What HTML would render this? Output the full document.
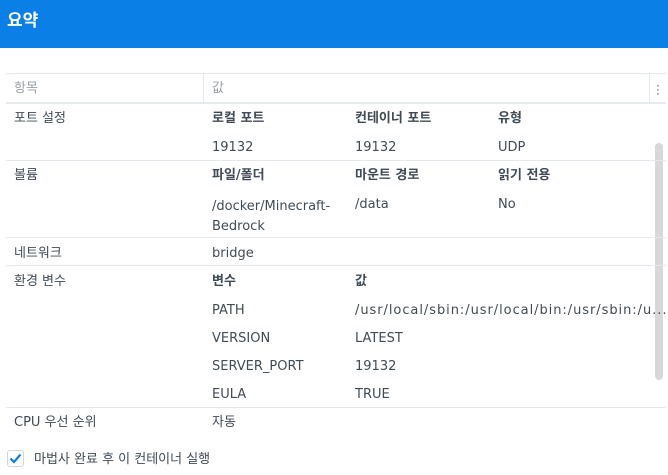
<!DOCTYPE html><html><head><meta charset="utf-8"><style>
body{margin:0;width:668px;height:475px;overflow:hidden;background:#fff;font-family:"DejaVu Sans","Noto Sans CJK KR",sans-serif;font-size:13px;color:#414b55;position:relative}
.hd{position:absolute;left:0;top:0;width:668px;height:48px;background:#0a7fe6;color:#fff;font-weight:bold;font-size:17px}
.hd span{position:absolute;left:7px;top:6px}
.t{position:absolute;white-space:nowrap;line-height:16px}
.b{font-weight:bold}
.ln{position:absolute;left:6px;width:660px;height:1px;background:#e3e8ee}
</style></head><body>
<div class="hd"><span>요약</span></div>
<div class="ln" style="top:73px"></div>
<div class="ln" style="top:102px;height:2px;background:#e6ebf0"></div>
<div style="position:absolute;left:203px;top:74px;width:1px;height:28px;background:#e3e8ee"></div>
<div style="position:absolute;left:649px;top:74px;width:1px;height:28px;background:#e3e8ee"></div>
<div class="t" style="left:656px;top:84px;color:#777;font-size:12px;line-height:4px">·<br>·<br>·</div>
<div class="t" style="left:14px;top:81px;color:#98a0a8">항목</div>
<div class="t" style="left:212px;top:81px;color:#98a0a8">값</div>
<div style="position:absolute;left:655px;top:143px;width:8px;height:237px;background:#d8d8d8;border-radius:4px"></div>
<div class="ln" style="top:160px"></div>
<div class="ln" style="top:237px"></div>
<div class="ln" style="top:265px"></div>
<div class="ln" style="top:407px"></div>

<div class="t" style="left:14px;top:111px">포트 설정</div>
<div class="t b" style="left:212px;top:111px">로컬 포트</div>
<div class="t b" style="left:355px;top:111px">컨테이너 포트</div>
<div class="t b" style="left:498px;top:111px">유형</div>
<div class="t" style="left:212px;top:140px">19132</div>
<div class="t" style="left:355px;top:140px">19132</div>
<div class="t" style="left:498px;top:140px">UDP</div>

<div class="t" style="left:14px;top:168px">볼륨</div>
<div class="t b" style="left:212px;top:168px">파일/폴더</div>
<div class="t b" style="left:355px;top:168px">마운트 경로</div>
<div class="t b" style="left:498px;top:168px">읽기 전용</div>
<div class="t" style="left:212px;top:197px;line-height:20px">/docker/Minecraft-<br>Bedrock</div>
<div class="t" style="left:355px;top:197px">/data</div>
<div class="t" style="left:498px;top:197px">No</div>

<div class="t" style="left:14px;top:246px">네트워크</div>
<div class="t" style="left:212px;top:246px">bridge</div>

<div class="t" style="left:14px;top:274px">환경 변수</div>
<div class="t b" style="left:212px;top:274px">변수</div>
<div class="t b" style="left:355px;top:274px">값</div>
<div class="t" style="left:212px;top:303px">PATH</div>
<div class="t" style="left:355px;top:303px;letter-spacing:0.95px">/usr/local/sbin:/usr/local/bin:/usr/sbin:/u...</div>
<div class="t" style="left:212px;top:331px">VERSION</div>
<div class="t" style="left:355px;top:331px">LATEST</div>
<div class="t" style="left:212px;top:359px">SERVER_PORT</div>
<div class="t" style="left:355px;top:359px">19132</div>
<div class="t" style="left:212px;top:387px">EULA</div>
<div class="t" style="left:355px;top:387px">TRUE</div>

<div class="t" style="left:14px;top:415px">CPU 우선 순위</div>
<div class="t" style="left:212px;top:415px">자동</div>

<div style="position:absolute;left:7px;top:450px;width:17px;height:17px;border:1px solid #d0d6dc;border-radius:3px;box-sizing:border-box;background:#fff"></div>
<svg style="position:absolute;left:7px;top:450px" width="17" height="17"><path d="M3.5 8.5 L7 12 L13.5 4.5" stroke="#0a7fe6" stroke-width="2.2" fill="none"/></svg>
<div class="t" style="left:34px;top:452px">마법사 완료 후 이 컨테이너 실행</div>
</body></html>
